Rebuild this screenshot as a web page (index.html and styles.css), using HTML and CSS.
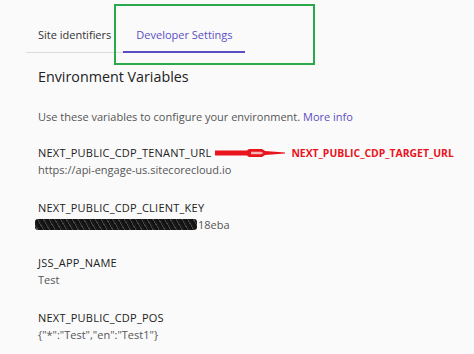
FILE: index.html
```html
<!DOCTYPE html>
<html>
<head>
<meta charset="utf-8">
<link rel="stylesheet" href="styles.css">
</head>
<body>
<div class="page">
  <div class="tabs">
    <div class="tab">Site identifiers</div>
    <div class="tab active">Developer Settings</div>
  </div>
  <div class="highlight"></div>
  <div class="content">
    <h2 class="title">Environment Variables</h2>
    <p class="desc">Use these variables to configure your environment. <a class="link">More info</a></p>
    <div class="var first">
      <div class="name-row">
        <span class="name">NEXT_PUBLIC_CDP_TENANT_URL</span>
        <svg class="arrow" width="70" height="10" viewBox="0 0 70 10">
          <path d="M0 2.6 L32 2.6 L34 1 L47 1 L50 3 L70 4.4 L70 5.6 L50 7 L47 9 L34 9 L32 7.4 L0 7.4 Z" fill="#e8141e"/>
          <path d="M36 3.7 L46 3.7 L48.5 5 L46 6.3 L36 6.3 Z" fill="#f7b4b4"/>
        </svg>
        <span class="note">NEXT_PUBLIC_CDP_TARGET_URL</span>
      </div>
      <div class="value">https://api-engage-us.sitecorecloud.io</div>
    </div>
    <div class="var">
      <div class="name">NEXT_PUBLIC_CDP_CLIENT_KEY</div>
      <div class="value"><span class="redact"></span>18eba</div>
    </div>
    <div class="var">
      <div class="name">JSS_APP_NAME</div>
      <div class="value">Test</div>
    </div>
    <div class="var">
      <div class="name">NEXT_PUBLIC_CDP_POS</div>
      <div class="value">{"*":"Test","en":"Test1"}</div>
    </div>
  </div>
</div>
</body>
</html>
```
FILE: styles.css
```css
html, body {
  margin: 0;
  padding: 0;
  background: #fafafa;
}
body {
  font-family: "Open Sans", "Noto Sans", sans-serif;
  color: #222;
  width: 474px;
  height: 354px;
  overflow: hidden;
}
.page {
  position: relative;
  padding-top: 26px;
}
.tabs {
  display: flex;
  width: fit-content;
  margin-left: 26px;
  border-bottom: 1px solid #dcdcdc;
}
.tab {
  font-size: 11px;
  line-height: 17px;
  color: #333;
  padding: 0 12px 8px 12px;
  white-space: nowrap;
}
.tab.active {
  color: #5a4fc2;
  padding: 0 12px 8px 13px;
  border-bottom: 2px solid #5a4fc2;
  margin-bottom: -1px;
}
.highlight {
  position: absolute;
  left: 114px;
  top: 4px;
  width: 197px;
  height: 57px;
  border: 2px solid #2aa84a;
}
.content {
  padding-left: 38px;
}
.title {
  margin: 13px 0 0;
  font-size: 14.3px;
  font-weight: 400;
  line-height: 22px;
  color: #222;
}
.desc {
  margin: 20px 0 0;
  font-size: 11px;
  line-height: 17px;
  color: #555;
}
.link {
  color: #5a4fc2;
}
.var {
  margin-top: 21px;
}
.var.first {
  margin-top: 19px;
}
.name-row {
  display: flex;
  align-items: center;
}
.name {
  font-size: 11px;
  letter-spacing: 0.23px;
  line-height: 17px;
  color: #222;
}
.arrow {
  margin-left: 4px;
}
.note {
  margin-left: 6px;
  font-size: 10.4px;
  font-weight: 700;
  color: #e8141e;
}
.value {
  font-size: 11px;
  line-height: 17px;
  color: #555;
  display: flex;
  align-items: center;
}
.redact {
  display: inline-block;
  width: 162px;
  height: 11px;
  margin-left: -3px;
  margin-right: 1px;
  background: repeating-linear-gradient(60deg, #111 0 2px, #444 2px 3px, #1a1a1a 3px 5px);
  border-radius: 3px;
  filter: blur(0.7px);
}
```
